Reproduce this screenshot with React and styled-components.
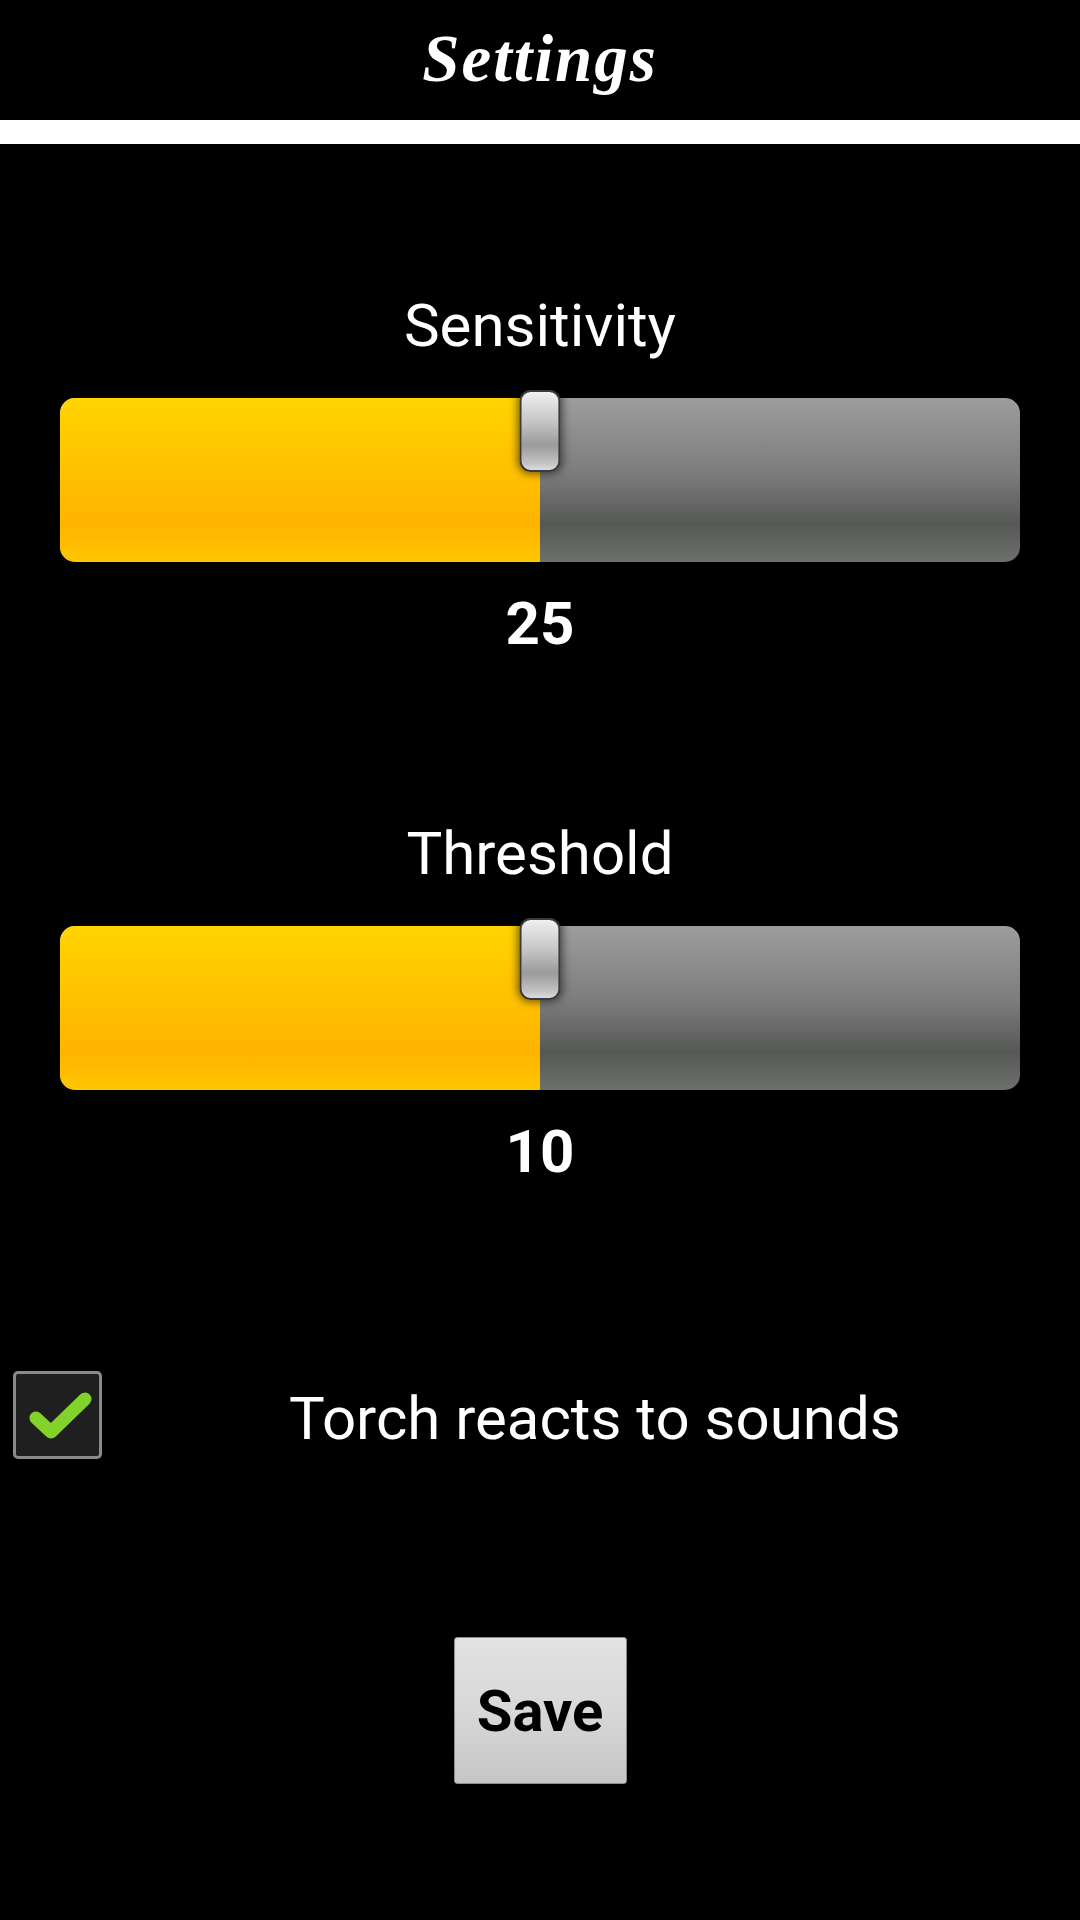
import React, { useState } from 'react';
import styled, { createGlobalStyle } from 'styled-components';

const GlobalStyle = createGlobalStyle`
    html, body {
        margin: 0;
        padding: 0;
        background: #000;
    }
    body {
        font-family: Roboto, "Liberation Sans", sans-serif;
        color: #fff;
    }
`;

const Screen = styled.div`
    width: 1080px;
    min-height: 1920px;
    background: #000;
    display: flex;
    flex-direction: column;
`;

const Header = styled.header`
    height: 120px;
    display: flex;
    align-items: center;
    justify-content: center;
`;

const Title = styled.h1`
    margin: 0;
    font-family: "Liberation Serif", "DejaVu Serif", serif;
    font-style: italic;
    font-weight: bold;
    font-size: 67px;
    letter-spacing: 2px;
    line-height: 1;
    color: #fff;
    padding-bottom: 4px;
`;

const Divider = styled.div`
    height: 24px;
    background: #fff;
`;

const Section = styled.section`
    display: flex;
    flex-direction: column;
    align-items: center;
    padding: 0 60px;
    margin-top: ${props => props.top}px;
`;

const Label = styled.div`
    font-size: 60px;
    line-height: 60px;
    color: #fff;
`;

const Value = styled.div`
    font-size: 60px;
    line-height: 60px;
    font-weight: bold;
    color: #fff;
    margin-top: 32px;
`;

const Track = styled.div`
    position: relative;
    width: 100%;
    height: 164px;
    margin-top: 42px;
    border-radius: 15px;
    background: linear-gradient(180deg, #9d9d9d 0%, #7c7d7c 45%, #565856 77%, #6e706e 100%);
`;

const Fill = styled.div`
    height: 100%;
    border-radius: 15px 0 0 15px;
    background: linear-gradient(180deg, #ffd400 0%, #ffc400 40%, #ffb400 77%, #ffc600 100%);
`;

const Thumb = styled.div`
    position: absolute;
    top: -8px;
    width: 37px;
    height: 78px;
    transform: translateX(-50%);
    border: 2px solid #3a3a3a;
    border-radius: 11px;
    background: linear-gradient(180deg, #f0f0f0 0%, #c9c9c9 35%, #9a9a9a 68%, #c4c4c4 92%, #dedede 100%);
    box-shadow: 0 0 8px 2px rgba(0, 0, 0, 0.55);
`;

const Slider = ({ value, max }) => {
    const pct = (value / max) * 100;
    return (
        <Track>
            <Fill style={{ width: `${pct}%` }} />
            <Thumb style={{ left: `${pct}%` }} />
        </Track>
    );
};

const CheckRow = styled.label`
    display: flex;
    align-items: center;
    padding-left: 13px;
    margin-top: 189px;
    cursor: pointer;
`;

const Box = styled.div`
    width: 83px;
    height: 82px;
    border: 3px solid #8a8a8a;
    border-radius: 5px;
    background: #1f1f1f;
    display: flex;
    align-items: center;
    justify-content: center;
`;

const CheckText = styled.span`
    margin-left: 187px;
    padding-top: 7px;
    font-size: 60px;
    line-height: 60px;
    color: #fff;
`;

const Footer = styled.div`
    display: flex;
    justify-content: center;
    margin-top: 178px;
`;

const SaveButton = styled.button`
    width: 173px;
    height: 147px;
    padding: 0;
    border: 1px solid #8c8c8c;
    border-radius: 3px;
    background: linear-gradient(180deg, #e2e2e2 0%, #d8d8d8 50%, #c6c6c6 100%);
    font-family: Roboto, "Liberation Sans", sans-serif;
    font-weight: bold;
    font-size: 58px;
    color: #000;
`;

const App = () => {
    const [torch, setTorch] = useState(true);

    return (
        <Screen>
            <GlobalStyle />
            <Header>
                <Title>Settings</Title>
            </Header>
            <Divider />

            <Section top={152}>
                <Label>Sensitivity</Label>
                <Slider value={25} max={50} />
                <Value>25</Value>
            </Section>

            <Section top={170}>
                <Label>Threshold</Label>
                <Slider value={10} max={20} />
                <Value>10</Value>
            </Section>

            <CheckRow onClick={() => setTorch(!torch)}>
                <Box>
                    {torch && (
                        <svg width="83" height="82" viewBox="0 0 83 82">
                            <polyline
                                points="20,44 35,58 69,25"
                                fill="none"
                                stroke="#82d22a"
                                strokeWidth="13"
                                strokeLinecap="round"
                                strokeLinejoin="round"
                            />
                        </svg>
                    )}
                </Box>
                <CheckText>Torch reacts to sounds</CheckText>
            </CheckRow>

            <Footer>
                <SaveButton>Save</SaveButton>
            </Footer>
        </Screen>
    );
};

export default App;
